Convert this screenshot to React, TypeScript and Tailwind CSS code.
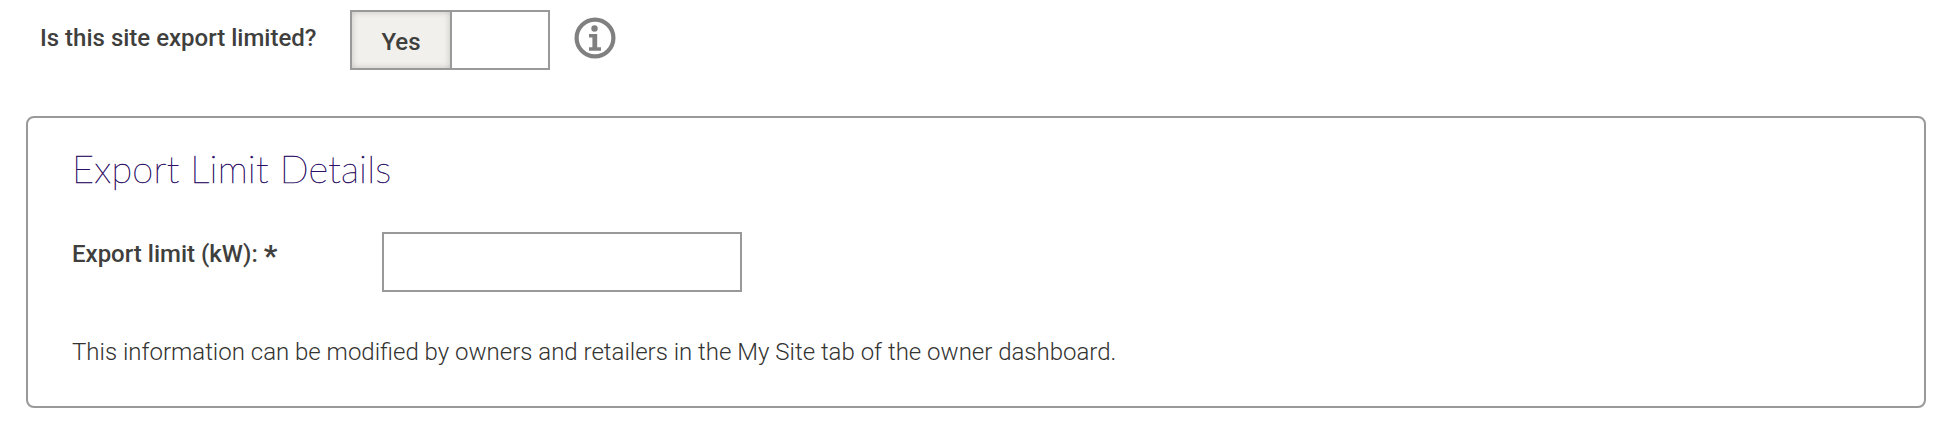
import * as React from 'react';

function InfoIcon() {
  return (
    <svg width="42" height="42" viewBox="0 0 42 42" className="ml-[24px] mt-[7px] shrink-0">
      <circle cx="21" cy="21" r="18.4" fill="none" stroke="#808080" strokeWidth="4.2" />
      <circle cx="20.5" cy="11.5" r="3.2" fill="#808080" />
      <path d="M15 17h8.2v13.2H27v3.6H15v-3.6h3.4v-9.6H15z" fill="#808080" />
    </svg>
  );
}

export default function App() {
  return (
    <div className="w-[1948px] h-[438px] bg-white overflow-hidden font-['Roboto',sans-serif] text-[#3f3f3d]">
      {/* Export limited toggle */}
      <div className="flex items-start pt-[10px] pl-[40px]">
        <label className="w-[310px] pt-[10px] text-[24px] leading-[36px] font-medium">Is this site export limited?</label>
        <div className="flex h-[60px] w-[200px] border-2 border-[#999999]">
          <button
            type="button"
            className="w-[100px] h-full pt-[3px] bg-[#f1f0ec] border-r-2 border-[#999999] text-[24px] font-medium shadow-[inset_0_0_6px_rgba(0,0,0,0.2)]"
          >
            Yes
          </button>
          <div className="flex-1" />
        </div>
        <InfoIcon />
      </div>

      {/* Details card */}
      <div className="mt-[46px] ml-[26px] w-[1900px] h-[292px] border-2 border-[#999999] rounded-[8px] px-[44px] pt-[25px]">
        <h2 className="font-['Lato',sans-serif] font-thin text-[38px] leading-[50px] tracking-[0.2px] text-[#2d1065] [-webkit-text-stroke:0.5px_#2d1065]">Export Limit Details</h2>
        <div className="flex items-start mt-[39px]">
          <label className="w-[310px] pt-[4px] text-[24px] leading-[36px] font-medium">
            Export limit (kW): <span className="text-[30px] leading-[28px] font-bold align-[-4px]">*</span>
          </label>
          <input type="text" className="w-[360px] h-[60px] border-2 border-[#999999] bg-white" />
        </div>
        <p className="mt-[42px] text-[24px] leading-[36px] font-light text-[#333331]">
          This information can be modified by owners and retailers in the My Site tab of the owner dashboard.
        </p>
      </div>
    </div>
  );
}
